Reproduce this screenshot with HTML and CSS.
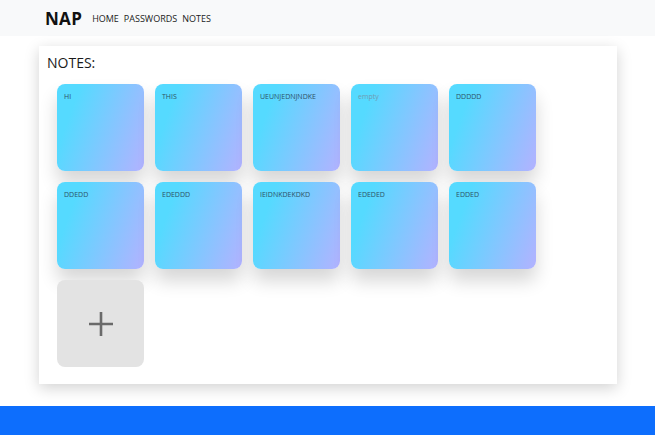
FILE: index.html
```html
<!DOCTYPE html>
<html>
<head>
<meta charset="utf-8">
<link rel="stylesheet" href="styles.css">
</head>
<body>
<nav class="navbar">
  <span class="brand">NAP</span>
  <a class="nav-link">HOME</a>
  <a class="nav-link">PASSWORDS</a>
  <a class="nav-link">NOTES</a>
</nav>
<main class="main">
  <section class="card">
    <h2 class="title">NOTES:</h2>
    <div class="grid">
      <div class="note"><span class="note-text">HI</span></div>
      <div class="note"><span class="note-text">THIS</span></div>
      <div class="note"><span class="note-text">UEUNJEDNJNDKE</span></div>
      <div class="note"><span class="note-text placeholder">empty</span></div>
      <div class="note"><span class="note-text">DDDDD</span></div>
      <div class="note"><span class="note-text">DDEDD</span></div>
      <div class="note"><span class="note-text">EDEDDD</span></div>
      <div class="note"><span class="note-text">IEIDNKDEKDKD</span></div>
      <div class="note"><span class="note-text">EDEDED</span></div>
      <div class="note"><span class="note-text">EDDED</span></div>
      <div class="add">
        <svg width="26" height="26" viewBox="0 0 26 26"><path d="M13 1V25M1 13H25" stroke="#6a6a6a" stroke-width="2.6"/></svg>
      </div>
    </div>
  </section>
</main>
<footer class="footer"></footer>
</body>
</html>
```
FILE: styles.css
```css
* { box-sizing: border-box; }
html, body { margin: 0; padding: 0; }
body {
  width: 655px;
  height: 435px;
  overflow: hidden;
  background: #fff;
  font-family: "Open Sans", "Noto Sans", sans-serif;
  color: #212529;
  display: flex;
  flex-direction: column;
}
.navbar {
  height: 36px;
  background: #f8f9fa;
  display: flex;
  align-items: center;
  padding-left: 45px;
}
.brand {
  font-weight: 700;
  font-size: 17px;
  color: #111;
  margin-right: 10px;
  letter-spacing: 0.3px;
}
.nav-link {
  font-size: 9px;
  color: #222;
  margin-right: 5px;
}
.main {
  padding: 10px 38px 0 39px;
  flex: 1;
}
.card {
  width: 578px;
  height: 338px;
  background: #fff;
  box-shadow: 0 4px 14px rgba(0,0,0,0.18);
  padding: 8px 0 0 8px;
}
.title {
  margin: 0;
  font-size: 14px;
  font-weight: 500;
  line-height: 18px;
  color: #1a1a1a;
}
.grid {
  margin: 12px 0 0 10px;
  display: grid;
  grid-template-columns: repeat(5, 87px);
  grid-auto-rows: 87px;
  gap: 11px;
}
.note {
  border-radius: 8px;
  background: linear-gradient(110deg, #55daff 20%, #b3b2ff 100%);
  box-shadow: 0 12px 18px rgba(0,0,0,0.16);
  padding: 8px 7px;
}
.note-text {
  display: block;
  font-size: 7px;
  color: #2d5266;
  line-height: 9px;
}
.placeholder { color: #6f9bb3; }
.add {
  border-radius: 8px;
  background: #e3e3e3;
  display: flex;
  align-items: center;
  justify-content: center;
}
.footer {
  height: 29px;
  background: #0d6efd;
}
```
